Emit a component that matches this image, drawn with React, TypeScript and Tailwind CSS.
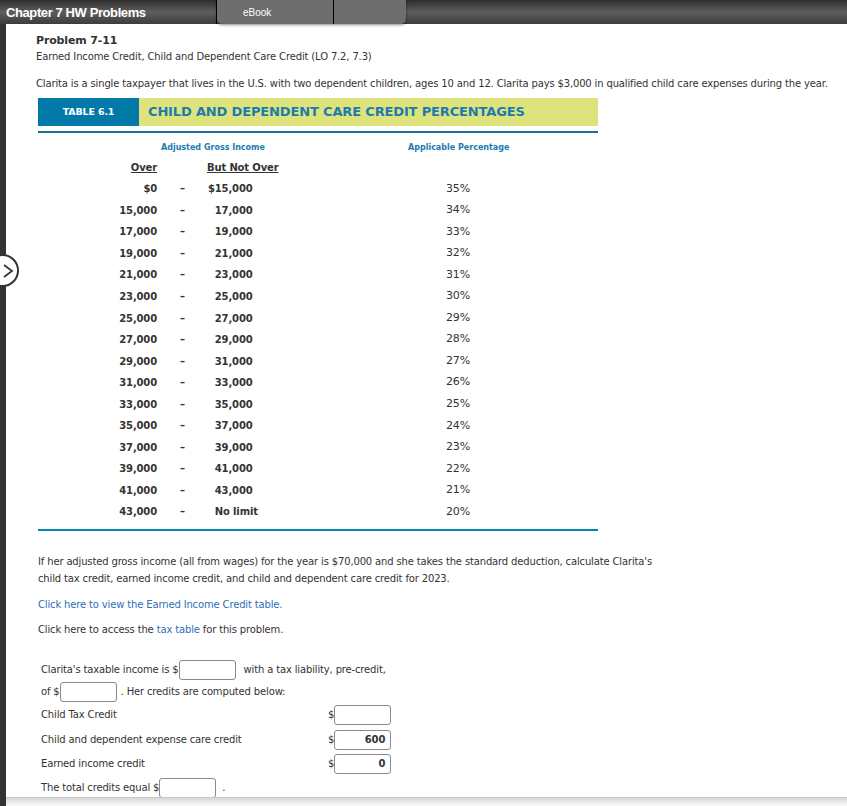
import React from 'react';

const rows: [string, string, string][] = [
  ['$0', '$15,000', '35%'],
  ['15,000', '17,000', '34%'],
  ['17,000', '19,000', '33%'],
  ['19,000', '21,000', '32%'],
  ['21,000', '23,000', '31%'],
  ['23,000', '25,000', '30%'],
  ['25,000', '27,000', '29%'],
  ['27,000', '29,000', '28%'],
  ['29,000', '31,000', '27%'],
  ['31,000', '33,000', '26%'],
  ['33,000', '35,000', '25%'],
  ['35,000', '37,000', '24%'],
  ['37,000', '39,000', '23%'],
  ['39,000', '41,000', '22%'],
  ['41,000', '43,000', '21%'],
  ['43,000', 'No limit', '20%'],
];

const Box = ({ value = '' }: { value?: string }) => (
  <span className="inline-flex h-[20px] w-[57px] items-center justify-end rounded-[3px] border border-[#8a8a8a] bg-white px-[5px] font-bold text-[#333]">
    {value}
  </span>
);

const App: React.FC = () => {
  return (
    <div className="relative h-[806px] w-[847px] overflow-hidden bg-[#333] font-['DejaVu_Sans',sans-serif] text-[10px] tracking-[-0.15px] text-[#333]">
      {/* top bar */}
      <div className="flex h-[24px] bg-gradient-to-b from-[#2e2e2e] via-[#5e5e5e] to-[#3c3c3c] tracking-normal">
        <div className="w-[216px] pl-[6px] pt-[3px] font-['Liberation_Sans',sans-serif] text-[13px] font-bold tracking-[-0.4px] text-white">
          Chapter 7 HW Problems
        </div>
        <div className="w-px bg-black" />
        <div className="flex h-[24px] w-[189px] overflow-hidden rounded-b-[5px] bg-[#6e6e6e] shadow-[0_1px_3px_rgba(0,0,0,0.45)]">
          <div className="flex w-[116px] items-center pl-[26px] font-['Liberation_Sans',sans-serif] text-[10px] text-white">
            eBook
          </div>
          <div className="w-px bg-black" />
          <div className="flex-1" />
        </div>
      </div>

      {/* content */}
      <div className="ml-[6px] h-[782px] bg-white pl-[30px] pt-[10px]">
        <div className="text-[11px] font-bold leading-[14px]">Problem 7-11</div>
        <div className="mt-[2px] leading-[14px]">Earned Income Credit, Child and Dependent Care Credit (LO 7.2, 7.3)</div>
        <div className="mt-[13px] leading-[14px]">
          Clarita is a single taxpayer that lives in the U.S. with two dependent children, ages 10 and 12. Clarita pays $3,000 in qualified child care expenses during the year.
        </div>

        {/* table */}
        <div className="ml-[2px] mt-[7px] w-[560px]">
          <div className="flex h-[28px]">
            <div className="flex w-[101px] items-center justify-center bg-[#0079a8] text-[9.5px] font-bold text-white">
              TABLE 6.1
            </div>
            <div className="flex flex-1 items-center bg-[#dfe37b] pl-[9px] text-[13px] font-bold text-[#1b7bb0]">
              CHILD AND DEPENDENT CARE CREDIT PERCENTAGES
            </div>
          </div>
          <div className="mt-[5px] h-[2px] bg-[#1a6f9c]" />
          <div className="flex pt-[9px] text-[8px] font-bold tracking-normal text-[#1b7bb0]">
            <div className="w-[370px] pl-[123px]">Adjusted Gross Income</div>
            <div>Applicable Percentage</div>
          </div>
          <div className="mt-[8px] flex font-bold leading-[12px]">
            <div className="w-[119px] text-right underline">Over</div>
            <div className="ml-[50px] underline">But Not Over</div>
          </div>
          <div className="mt-[4px] font-bold">
            {rows.map(([over, notOver, pct]) => (
              <div key={over} className="flex h-[21.55px] items-center">
                <div className="w-[119px] text-right">{over}</div>
                <div className="ml-[23px] w-[28px]">–</div>
                <div className="w-[238px]">
                  {notOver.startsWith('$') ? notOver : (
                    <>
                      <span className="invisible">$</span>
                      {notOver}
                    </>
                  )}
                </div>
                <div className="text-[11px] font-normal">{pct}</div>
              </div>
            ))}
          </div>
          <div className="mt-[6px] h-[2px] bg-[#0a83b5]" />
        </div>

        <div className="ml-[2px] mt-[22px] w-[630px] leading-[17px]">
          If her adjusted gross income (all from wages) for the year is $70,000 and she takes the standard deduction, calculate Clarita's child tax credit, earned income credit, and child and dependent care credit for 2023.
        </div>
        <div className="ml-[2px] mt-[11px] leading-[14px] text-[#2f6fb8]">Click here to view the Earned Income Credit table.</div>
        <div className="ml-[2px] mt-[11px] leading-[14px]">
          Click here to access the <span className="text-[#2f6fb8]">tax table</span> for this problem.
        </div>

        {/* answer block */}
        <div className="ml-[5px] mt-[23px] w-[360px] leading-[12px]">
          <div className="flex h-[21px] items-center">
            Clarita's taxable income is $<Box />
            <span className="ml-[8px]">with a tax liability, pre-credit,</span>
          </div>
          <div className="flex h-[22px] items-center">
            of $<Box />
            <span className="ml-[4px]">. Her credits are computed below:</span>
          </div>
          {[
            ['Child Tax Credit', ''],
            ['Child and dependent expense care credit', '600'],
            ['Earned income credit', '0'],
          ].map(([label, val]) => (
            <div key={label} className="flex h-[24.5px] items-center">
              <div className="w-[287px]">{label}</div>
              $<Box value={val} />
            </div>
          ))}
          <div className="flex h-[24px] items-center">
            The total credits equal $<Box />
            <span className="ml-[6px]">.</span>
          </div>
        </div>
      </div>

      {/* bottom strip */}
      <div className="absolute bottom-0 left-[6px] right-0 h-[9px] border-t border-[#c8c8c8] bg-gradient-to-b from-[#d8d8d8] to-[#fafafa]" />

      {/* side toggle */}
      <div className="absolute left-[-14px] top-[254px] flex h-[33px] w-[33px] items-center justify-center rounded-full border-2 border-[#333] bg-white">
        <svg width="14" height="16" viewBox="0 0 14 16" className="ml-[11px]">
          <path d="M3 2 L11 8 L3 14" fill="none" stroke="#333" strokeWidth="1.7" />
        </svg>
      </div>
    </div>
  );
};

export default App;
